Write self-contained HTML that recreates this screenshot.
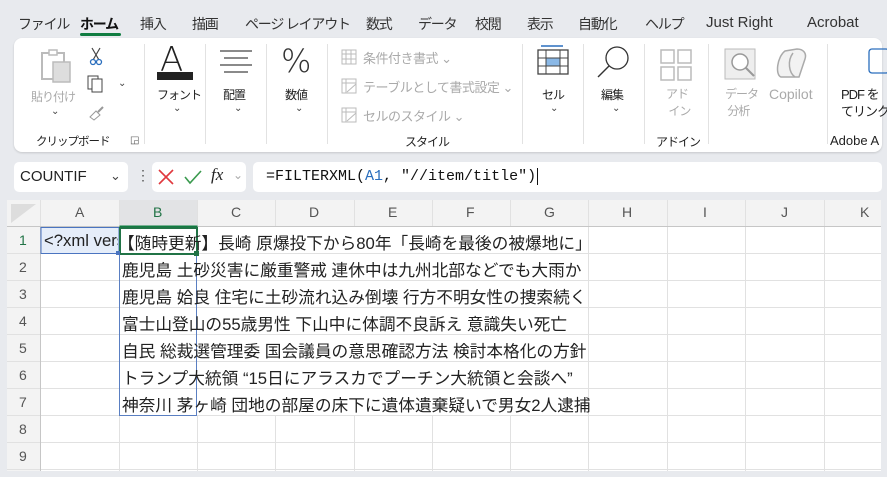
<!DOCTYPE html>
<html><head><meta charset="utf-8"><style>
*{margin:0;padding:0;box-sizing:border-box}
body{width:887px;height:477px;overflow:hidden;background:#e8eaee;font-family:"Liberation Sans","Noto Sans CJK JP",sans-serif;position:relative;color:#222}
.a{position:absolute;white-space:nowrap}
.tab{top:14px;font-size:14px;color:#333;letter-spacing:-1.2px}
.card{position:absolute;left:14px;top:38px;width:868px;height:114px;background:#fff;border-radius:8px;box-shadow:0 1px 2px rgba(0,0,0,.15)}
.sep{position:absolute;top:44px;width:1px;height:100px;background:#e2e2e2}
.lbl{font-size:12px;color:#222;letter-spacing:-1px}
.gr{color:#aaa}
.chev{font-size:10px;color:#444}
.fb{position:absolute;background:#fff;border-radius:5px;top:162px;height:30px}
.grid{position:absolute;left:7px;top:200px;width:874px;height:271px;background:#fff;overflow:hidden}
.cell{font-size:16.7px;position:absolute;letter-spacing:0}
.h{font-size:14px;position:absolute}
.st{font-size:13px;color:#aaa;letter-spacing:-0.5px}
</style></head><body>
<div class="a tab" style="left:18px">ファイル</div>
<div class="a tab" style="left:80px;font-weight:bold;color:#111">ホーム</div>
<div class="a" style="left:80px;top:33px;width:41px;height:3px;background:#107c41;border-radius:2px"></div>
<div class="a tab" style="left:140px">挿入</div>
<div class="a tab" style="left:192px">描画</div>
<div class="a tab" style="left:245px">ページ レイアウト</div>
<div class="a tab" style="left:366px">数式</div>
<div class="a tab" style="left:418px">データ</div>
<div class="a tab" style="left:475px">校閲</div>
<div class="a tab" style="left:527px">表示</div>
<div class="a tab" style="left:578px">自動化</div>
<div class="a tab" style="left:645px">ヘルプ</div>
<div class="a tab" style="left:706px;font-size:15px;letter-spacing:0">Just Right</div>
<div class="a tab" style="left:807px;font-size:15px;letter-spacing:0">Acrobat</div>

<div class="card"></div>
<!-- clipboard -->
<svg class="a" style="left:40px;top:48px" width="34" height="36"><rect x="2" y="5" width="22" height="26" fill="none" stroke="#bbb" stroke-width="2"/><rect x="9" y="2" width="8" height="5" fill="#fff" stroke="#bbb" stroke-width="1.5"/><rect x="13" y="14" width="17" height="20" fill="#ddd" stroke="#bbb" stroke-width="1.5"/></svg>
<div class="a lbl gr" style="left:31px;top:88px">貼り付け</div>
<div class="a chev gr" style="left:51px;top:106px">⌄</div>
<svg class="a" style="left:89px;top:47px" width="14" height="20"><path d="M3 1L10 13M11 1L4 13" stroke="#444" stroke-width="1.2"/><circle cx="4" cy="15" r="2.5" fill="none" stroke="#2a6ebd" stroke-width="1.3"/><circle cx="10" cy="15" r="2.5" fill="none" stroke="#2a6ebd" stroke-width="1.3"/></svg>
<svg class="a" style="left:86px;top:74px" width="20" height="20"><rect x="2" y="2" width="10" height="13" fill="none" stroke="#444"/><rect x="6" y="5" width="10" height="13" fill="#fff" stroke="#444"/></svg>
<div class="a chev" style="left:118px;top:78px">⌄</div>
<svg class="a" style="left:88px;top:105px" width="18" height="16"><path d="M2 12L8 6L12 10L6 15Z" fill="none" stroke="#999"/><path d="M10 7L15 2" stroke="#999" stroke-width="2"/></svg>
<div class="a lbl" style="left:36px;top:133px;font-size:11.5px">クリップボード</div>
<div class="a" style="left:130px;top:135px;font-size:10px;color:#555">◲</div>
<div class="sep" style="left:144px"></div>
<!-- font -->
<div class="a" style="left:160px;top:40px;font-size:34px;font-weight:100;color:#222;font-family:'DejaVu Sans'">A</div>
<div class="a" style="left:157px;top:72px;width:36px;height:8px;background:#222"></div>
<div class="a lbl" style="left:157px;top:86px">フォント</div>
<div class="a chev" style="left:173px;top:103px">⌄</div>
<div class="sep" style="left:205px"></div>
<!-- align -->
<svg class="a" style="left:219px;top:50px" width="34" height="24"><path d="M1 1H33M5 8H29M1 15H33M5 22H29" stroke="#444" stroke-width="1.2"/></svg>
<div class="a lbl" style="left:223px;top:86px">配置</div>
<div class="a chev" style="left:234px;top:103px">⌄</div>
<div class="sep" style="left:266px"></div>
<!-- number -->
<div class="a" style="left:281px;top:42px;font-size:32px;font-weight:100;color:#333;font-family:'DejaVu Sans'">%</div>
<div class="a lbl" style="left:285px;top:86px">数値</div>
<div class="a chev" style="left:295px;top:103px">⌄</div>
<div class="sep" style="left:327px"></div>
<!-- style -->
<svg class="a" style="left:341px;top:49px" width="16" height="16"><rect x="1" y="1" width="14" height="14" fill="none" stroke="#bbb"/><path d="M1 5H15M1 10H15M5 1V15M10 1V15" stroke="#bbb"/></svg>
<div class="a st" style="left:363px;top:48px">条件付き書式 ⌄</div>
<svg class="a" style="left:341px;top:78px" width="16" height="16"><rect x="1" y="1" width="14" height="14" fill="none" stroke="#bbb"/><path d="M1 5H15M5 1V15M6 14L15 6" stroke="#bbb"/></svg>
<div class="a st" style="left:363px;top:77px">テーブルとして書式設定 ⌄</div>
<svg class="a" style="left:341px;top:107px" width="16" height="16"><rect x="1" y="1" width="14" height="14" fill="none" stroke="#bbb"/><path d="M1 5H15M5 1V15M6 14L15 6" stroke="#bbb"/></svg>
<div class="a st" style="left:363px;top:106px">セルのスタイル ⌄</div>
<div class="a lbl" style="left:405px;top:133px">スタイル</div>
<div class="sep" style="left:522px"></div>
<!-- cell -->
<svg class="a" style="left:536px;top:44px" width="34" height="32"><path d="M5 2H27" stroke="#2a6ebd" stroke-width="1.5"/><rect x="2" y="6" width="30" height="24" fill="none" stroke="#444" stroke-width="1.3"/><rect x="10" y="14" width="14" height="8" fill="#8ab8e6" stroke="#2a6ebd"/><path d="M2 14H32M2 22H32M10 6V30M24 6V30" stroke="#444" stroke-width="1"/></svg>
<div class="a lbl" style="left:542px;top:86px">セル</div>
<div class="a chev" style="left:550px;top:103px">⌄</div>
<div class="sep" style="left:583px"></div>
<!-- edit -->
<svg class="a" style="left:596px;top:44px" width="36" height="36"><circle cx="21" cy="14" r="11" fill="none" stroke="#333" stroke-width="1.3"/><path d="M13 22L2 33" stroke="#333" stroke-width="1.4"/></svg>
<div class="a lbl" style="left:601px;top:86px">編集</div>
<div class="a chev" style="left:612px;top:103px">⌄</div>
<div class="sep" style="left:644px"></div>
<!-- addin -->
<svg class="a" style="left:659px;top:48px" width="34" height="34"><rect x="2" y="2" width="13" height="13" fill="none" stroke="#bbb" stroke-width="1.5"/><rect x="19" y="2" width="13" height="13" fill="none" stroke="#bbb" stroke-width="1.5"/><rect x="2" y="19" width="13" height="13" fill="none" stroke="#bbb" stroke-width="1.5"/><rect x="19" y="19" width="13" height="13" fill="none" stroke="#bbb" stroke-width="1.5"/></svg>
<div class="a lbl gr" style="left:666px;top:86px;line-height:17px">アド<br>&nbsp;イン</div>
<div class="a lbl" style="left:656px;top:133px">アドイン</div>
<div class="sep" style="left:708px"></div>
<!-- data analysis -->
<svg class="a" style="left:724px;top:48px" width="36" height="34"><rect x="1" y="1" width="30" height="30" fill="#eee" stroke="#bbb"/><circle cx="16" cy="14" r="8" fill="#fff" stroke="#999" stroke-width="1.5"/><path d="M22 20L30 28" stroke="#999" stroke-width="2"/></svg>
<div class="a lbl gr" style="left:725px;top:86px;line-height:17px">データ<br>&nbsp;分析</div>
<svg class="a" style="left:773px;top:47px" width="40" height="34"><path d="M8 30C2 28 4 10 12 4L24 2C30 2 34 6 32 12L26 30Z" fill="#f2f2f2" stroke="#aaa" stroke-width="1.5"/><path d="M20 6C14 14 16 26 22 30" stroke="#aaa" fill="none" stroke-width="1.5"/></svg>
<div class="a lbl gr" style="left:769px;top:86px;font-size:14px;letter-spacing:0">Copilot</div>
<div class="sep" style="left:827px"></div>
<svg class="a" style="left:868px;top:45px" width="19" height="34"><rect x="1" y="4" width="20" height="24" rx="3" fill="none" stroke="#2a6ebd" stroke-width="1.3"/></svg>
<div class="a lbl" style="left:841px;top:86px;line-height:17px;font-size:13px">PDF を<br>てリンク</div>
<div class="a lbl" style="left:830px;top:133px;letter-spacing:0;font-size:13px">Adobe A</div>

<!-- formula bar -->
<div class="fb" style="left:14px;width:114px"></div>
<div class="a" style="left:20px;top:168px;font-size:15px;color:#222">COUNTIF</div>
<div class="a chev" style="left:110px;top:168px;font-size:13px">⌄</div>
<div class="a" style="left:136px;top:167px;font-size:14px;color:#555">⋮</div>
<div class="fb" style="left:152px;width:94px"></div>
<svg class="a" style="left:158px;top:169px" width="50" height="16"><path d="M1 1L15 15M15 1L1 15" stroke="#e0393e" stroke-width="1.6"/><path d="M27 8L32 14L43 2" fill="none" stroke="#3a9a4e" stroke-width="1.6"/></svg>
<div class="a" style="left:211px;top:165px;font-size:17px;font-style:italic;font-family:'Liberation Serif'">fx</div>
<div class="a chev" style="left:233px;top:168px;color:#aaa;font-size:12px">⌄</div>
<div class="fb" style="left:253px;width:629px"></div>
<div class="a" style="left:266px;top:168px;font-size:15px;font-family:'Liberation Mono';color:#111">=FILTERXML(<span style="color:#2a6ebd">A1</span>, "//item/title")<span style="border-left:1px solid #111;margin-left:1px"></span></div>

<!-- grid -->
<div class="grid">
<svg class="a" style="left:0;top:0" width="874" height="271">
<rect x="0" y="0" width="874" height="27" fill="#f3f3f3"/>
<rect x="0" y="0" width="33" height="271" fill="#f3f3f3"/>
<rect x="112" y="0" width="78" height="27" fill="#e2e3e5"/>
<rect x="33" y="27" width="79" height="27" fill="#e5edf9"/>
<path d="M4 4L29 4L4 23Z" fill="#ddd"/>
<g stroke="#e1e1e1" stroke-width="1">
<path d="M0 53.5H874M0 80.5H874M0 107.5H874M0 134.5H874M0 161.5H874M0 188.5H874M0 215.5H874M0 242.5H874M0 269.5H874"/>
<path d="M112.5 0V27M190.5 0V27M268.5 0V27M347.5 0V27M425.5 0V27M503.5 0V27M581.5 0V27M660.5 0V271M738.5 0V271M817.5 0V271"/>
<path d="M112.5 27V271M190.5 215V271M268.5 215V271M347.5 215V271M425.5 215V271M503.5 215V271M581.5 27V271"/>
<path d="M33.5 0V271"/>
</g>
<path d="M0 26.5H874" stroke="#c6c6c6"/>
<path d="M33.5 27V271" stroke="#c6c6c6"/>
<path d="M112.5 26.5H190.5" stroke="#107c41" stroke-width="2"/>
<rect x="112.5" y="27.5" width="77" height="188" fill="none" stroke="#5a7fc2" stroke-width="1"/>
<rect x="34" y="27.5" width="78" height="26" fill="none" stroke="#4a74c0" stroke-width="1"/>
<rect x="113" y="28" width="77" height="26" fill="none" stroke="#217346" stroke-width="2"/>
<rect x="187" y="51" width="5" height="5" fill="#217346"/>
<rect x="109" y="51" width="4" height="4" fill="#4a74c0"/>
</svg>
<div class="h" style="left:68px;top:4px;color:#555">A</div>
<div class="h" style="left:146px;top:4px;color:#217346">B</div>
<div class="h" style="left:224px;top:4px;color:#555">C</div>
<div class="h" style="left:302px;top:4px;color:#555">D</div>
<div class="h" style="left:381px;top:4px;color:#555">E</div>
<div class="h" style="left:459px;top:4px;color:#555">F</div>
<div class="h" style="left:537px;top:4px;color:#555">G</div>
<div class="h" style="left:615px;top:4px;color:#555">H</div>
<div class="h" style="left:696px;top:4px;color:#555">I</div>
<div class="h" style="left:774px;top:4px;color:#555">J</div>
<div class="h" style="left:853px;top:4px;color:#555">K</div>
<div class="h" style="left:12px;top:32px;color:#217346">1</div>
<div class="h" style="left:12px;top:59px;color:#555">2</div>
<div class="h" style="left:12px;top:86px;color:#555">3</div>
<div class="h" style="left:12px;top:113px;color:#555">4</div>
<div class="h" style="left:12px;top:140px;color:#555">5</div>
<div class="h" style="left:12px;top:167px;color:#555">6</div>
<div class="h" style="left:12px;top:194px;color:#555">7</div>
<div class="h" style="left:12px;top:221px;color:#555">8</div>
<div class="h" style="left:12px;top:248px;color:#555">9</div>
<div class="cell" style="left:37px;top:31px;width:74px;overflow:hidden;white-space:nowrap">&lt;?xml version</div>
<div class="cell" style="left:111px;top:30px">【随時更新】長崎 原爆投下から80年「長崎を最後の被爆地に」</div>
<div class="cell" style="left:115px;top:57px">鹿児島 土砂災害に厳重警戒 連休中は九州北部などでも大雨か</div>
<div class="cell" style="left:115px;top:84px">鹿児島 姶良 住宅に土砂流れ込み倒壊 行方不明女性の捜索続く</div>
<div class="cell" style="left:115px;top:111px">富士山登山の55歳男性 下山中に体調不良訴え 意識失い死亡</div>
<div class="cell" style="left:115px;top:138px">自民 総裁選管理委 国会議員の意思確認方法 検討本格化の方針</div>
<div class="cell" style="left:115px;top:165px">トランプ大統領 “15日にアラスカでプーチン大統領と会談へ”</div>
<div class="cell" style="left:115px;top:192px">神奈川 茅ヶ崎 団地の部屋の床下に遺体遺棄疑いで男女2人逮捕</div>
</div>
</body></html>
